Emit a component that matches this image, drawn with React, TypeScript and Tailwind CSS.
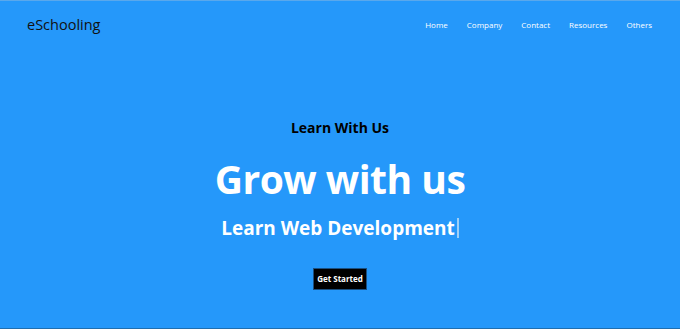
export default function App() {
  return (
    <div className="w-[680px] h-[329px] bg-[#2598fa] flex flex-col border-t border-[#5aa8ec] border-b border-b-[#1f6fb0]" style={{ fontFamily: '"Open Sans", "Noto Sans", sans-serif' }}>
      <nav className="flex items-center justify-between h-[47px] pl-[27px] pr-[28px]">
        <span className="text-[14.5px] text-[#111]">eSchooling</span>
        <ul className="flex gap-[19px] text-[8px] text-white">
          <li>Home</li>
          <li>Company</li>
          <li>Contact</li>
          <li>Resources</li>
          <li>Others</li>
        </ul>
      </nav>
      <div className="flex flex-col items-center pt-[73px]">
        <h3 className="text-[14px] font-bold text-black leading-none">Learn With Us</h3>
        <h1 className="mt-[24px] text-[39px] font-bold text-white leading-none tracking-[-0.5px]">Grow with us</h1>
        <h2 className="mt-[20px] text-[19px] font-bold text-white leading-none flex items-center">
          Learn Web Development<span className="ml-[2px] inline-block w-[2px] h-[20px] bg-[#9fcff7]"></span>
        </h2>
        <button className="mt-[30px] bg-black text-white text-[8px] font-bold px-[3px] py-[6px] leading-none border border-[#1a4f80]">Get Started</button>
      </div>
    </div>
  );
}
